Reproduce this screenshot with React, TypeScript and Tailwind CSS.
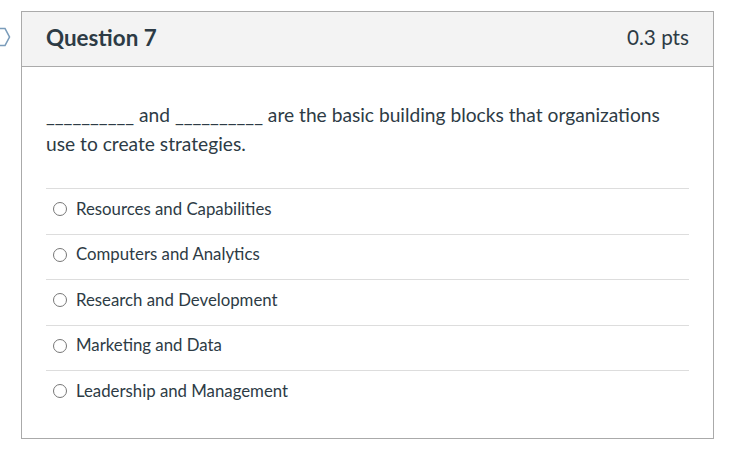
const answers = [
  "Resources and Capabilities",
  "Computers and Analytics",
  "Research and Development",
  "Marketing and Data",
  "Leadership and Management",
];

export default function App() {
  return (
    <div className="w-[745px] h-[463px] bg-white font-['Lato',sans-serif] text-[#2d3b45] pt-[11px] pl-[21px] relative">
      {/* question marker, mostly off screen */}
      <svg className="absolute left-[-10px] top-[27px]" width="21" height="20" viewBox="0 0 21 20">
        <path d="M5 1.5 H15 L19.5 10 L15 18.5 H5 L0.5 10 Z" fill="none" stroke="#7a9cba" strokeWidth="1.6" />
      </svg>

      <div className="w-[693px] border border-[#aaaaaa]">
        {/* header */}
        <div className="h-[55px] bg-[#f3f3f3] border-b border-[#aaaaaa] px-6 pb-[3px] flex items-center justify-between">
          <h2 className="text-[22.4px] font-bold text-[#2d3b45]">Question 7</h2>
          <span className="text-[20.7px] text-[#2d3b45]">0.3 pts</span>
        </div>

        {/* body */}
        <div className="px-6 pt-[33px] pb-[22px]">
          <p className="text-[19.2px] leading-[29px] pr-6">
            __________ and __________ are the basic building blocks that organizations use to create strategies.
          </p>

          <div className="mt-[30px]">
            {answers.map((a) => (
              <div key={a} className="h-[45.5px] border-t border-[#dddddd] flex items-center pl-[7px] pb-[6px]">
                <span className="w-[14px] h-[14px] rounded-full border border-[#777777] bg-white shrink-0 mt-[2px]" />
                <span className="ml-[9px] text-[16.8px]">{a}</span>
              </div>
            ))}
          </div>
        </div>
      </div>
    </div>
  );
}
